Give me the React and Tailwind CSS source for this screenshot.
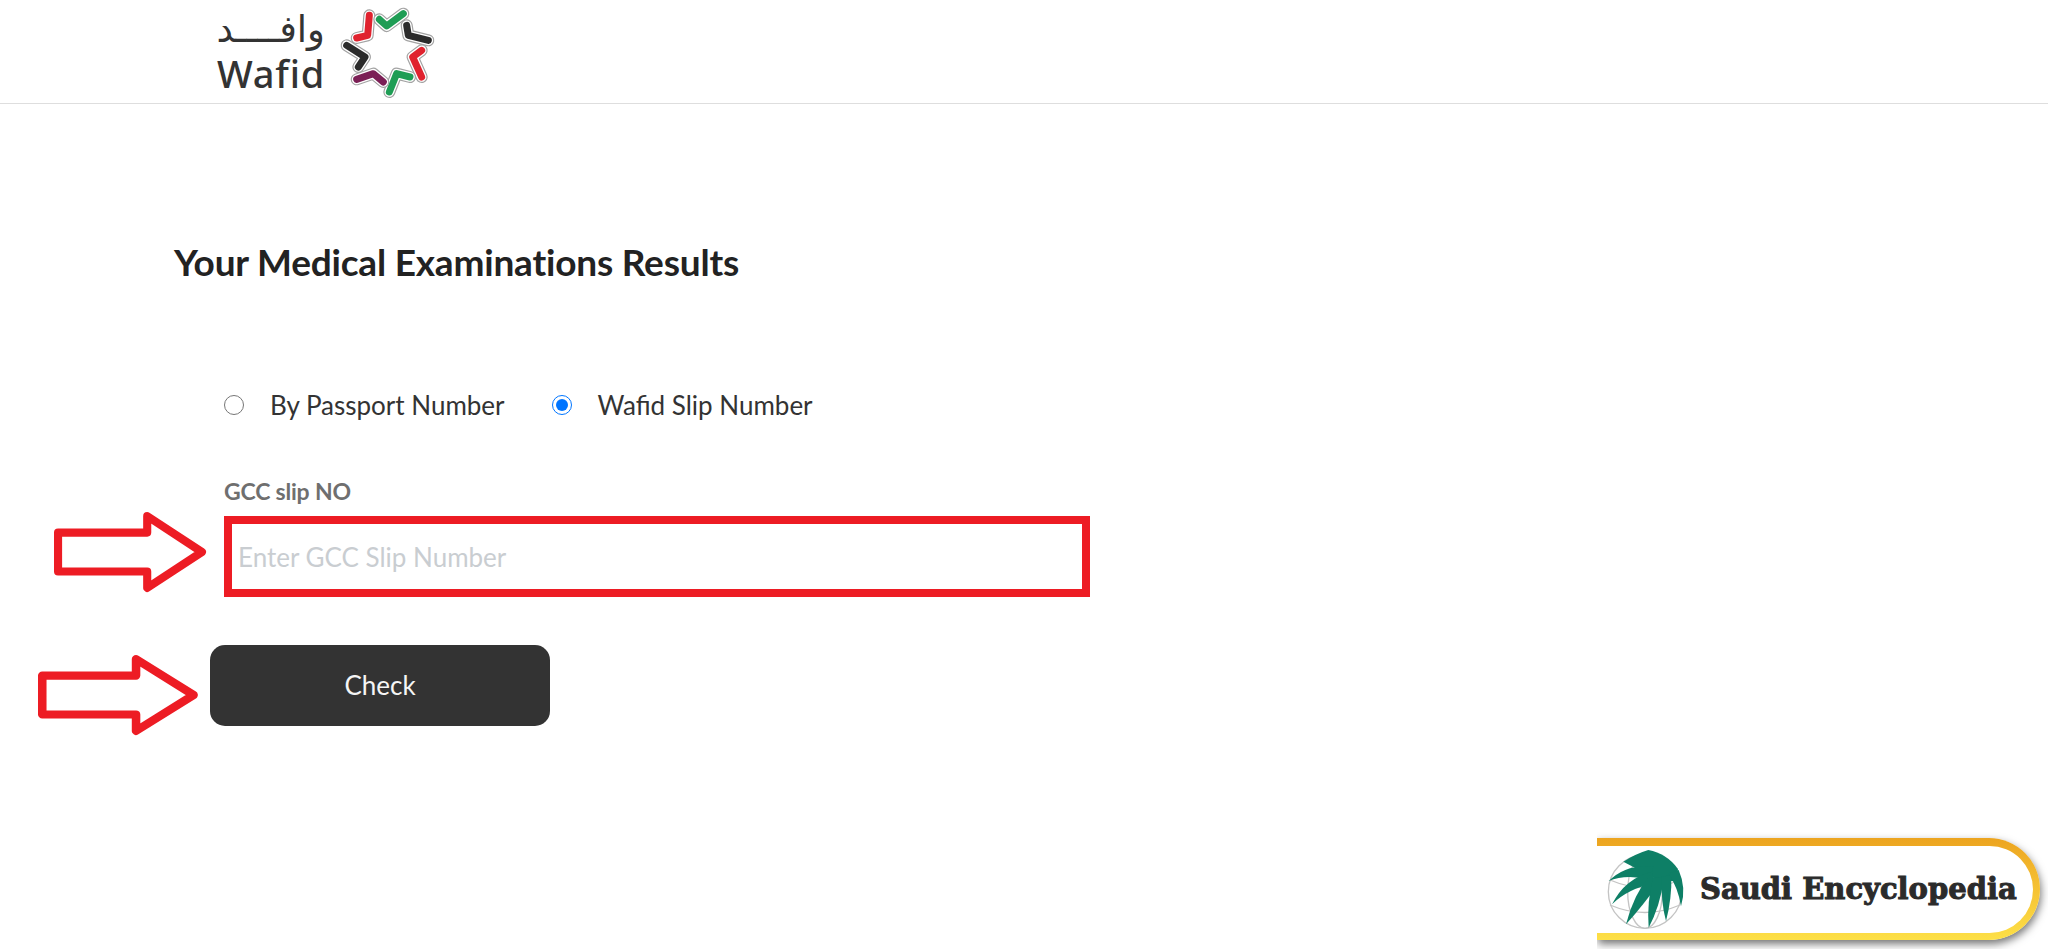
const chevrons = [
  { points: '118,40 113,100 80,108', color: '#e0222e' },
  { points: '148,52 170,72 220,35', color: '#1f9d55' },
  { points: '230,70 235,100 295,115', color: '#2b2b2b' },
  { points: '275,145 248,165 275,225', color: '#e0222e' },
  { points: '178,270 200,215 240,225', color: '#1f9d55' },
  { points: '160,240 130,215 80,232', color: '#7b1f55' },
  { points: '50,130 105,165 85,195', color: '#2b2b2b' },
]

function WafidStar() {
  return (
    <svg className="w-[110px] h-[100px] shrink-0" viewBox="0 0 330 300" fill="none">
      {chevrons.map((c) => (
        <g key={c.points} strokeLinecap="round" strokeLinejoin="round">
          <polyline points={c.points} stroke="#a3a3a3" strokeWidth="36" />
          <polyline points={c.points} stroke="#ffffff" strokeWidth="29" />
          <polyline points={c.points} stroke={c.color} strokeWidth="21" />
        </g>
      ))}
    </svg>
  )
}

function OutlineArrow({ className }) {
  return (
    <svg className={className} viewBox="0 0 152 80" fill="none" preserveAspectRatio="none">
      <path
        d="M4 21 H92 V5 L146 40 L92 75 V59 H4 Z"
        stroke="#ed1c24"
        strokeWidth="8"
        strokeLinejoin="round"
      />
    </svg>
  )
}

function Globe() {
  return (
    <svg className="w-[90px] h-[90px] shrink-0" viewBox="0 0 270 270" fill="none">
      <g stroke="#c4c4c4" strokeWidth="4">
        <circle cx="135" cy="140" r="110" />
        <ellipse cx="135" cy="140" rx="52" ry="110" />
        <path d="M30 105 Q135 150 240 105 M30 180 Q135 225 240 180" />
      </g>
      <g fill="#0e7f66">
        <path d="M165 100 L70 50 Q110 25 145 15 Q200 25 234 72 L228 110 Z" />
        <path d="M160 65 Q80 55 26 108 Q80 85 150 105 Z" />
        <path d="M155 80 Q75 100 36 178 Q85 130 165 115 Z" />
        <path d="M150 90 Q100 150 78 238 Q130 180 180 110 Z" />
        <path d="M160 95 Q140 170 146 248 Q180 185 192 100 Z" />
        <path d="M185 95 Q182 170 198 228 Q216 160 214 90 Z" />
        <path d="M205 85 Q235 130 243 184 Q260 130 236 75 Z" />
      </g>
    </svg>
  )
}

export default function App() {
  return (
    <div className="relative min-h-[949px] overflow-hidden bg-white font-['Lato',sans-serif] text-[#212529]">
      <header className="h-[104px] border-b border-[#dedede] pl-[217px] flex items-center gap-[5px]">
        <div className="w-[108px] text-[#333] pb-[6px]">
          <div className="h-[48px] text-right font-['DejaVu_Sans',sans-serif] text-[37px] leading-[48px]" dir="rtl">
            وافــــد
          </div>
          <div className="font-['Noto_Sans',sans-serif] font-medium text-[38px] leading-[38px] tracking-[0.8px]">Wafid</div>
        </div>
        <WafidStar />
      </header>

      <main className="pl-[174px] pt-[136px]">
        <h1 className="text-[37px] leading-[44px] font-bold tracking-[-0.2px] text-[#222]">
          Your Medical Examinations Results
        </h1>

        <form className="pl-[50px] pt-[99px]">
          <div className="flex items-center h-[44px] text-[26px] text-[#333]">
            <input type="radio" name="mode" className="w-[20px] h-[20px]" />
            <label className="ml-[26px]">By Passport Number</label>
            <input type="radio" name="mode" defaultChecked className="w-[20px] h-[20px] ml-[47px]" />
            <label className="ml-[26px]">Wafid Slip Number</label>
          </div>

          <label className="block mt-[50px] text-[23px] leading-[28px] font-bold tracking-[-0.2px] text-[#6f6f6f]">GCC slip NO</label>

          <div className="relative mt-[11px] w-[866px]">
            <OutlineArrow className="absolute left-[-170px] top-[-5px] w-[154px] h-[82px]" />
            <input
              type="text"
              placeholder="Enter GCC Slip Number"
              className="block w-full h-[81px] border-[8px] border-[#ed1c24] bg-white px-[6px] text-[26px] outline-none placeholder:text-[#c9cdd1]"
            />
          </div>

          <div className="relative mt-[48px] ml-[-14px] w-[340px]">
            <OutlineArrow className="absolute left-[-172px] top-[9px] w-[162px] h-[82px]" />
            <button type="button" className="w-full h-[81px] rounded-[15px] bg-[#333333] text-[26px] text-[#f5f5f5]">
              Check
            </button>
          </div>
        </form>
      </main>

      <div className="absolute left-[1597px] top-[825px] w-[451px] h-[124px] overflow-hidden pt-[13px]">
        <div className="w-[443px] h-[102px] rounded-r-[52px] bg-gradient-to-b from-[#eca41f] to-[#fde047] pt-[8px] pb-[7px] pr-[7px] shadow-[1px_4px_9px_rgba(0,0,0,0.55)]">
          <div className="h-full rounded-r-[45px] bg-white flex items-center pl-[3px] gap-[10px]">
            <Globe />
            <span className="font-['DejaVu_Serif',serif] font-bold text-[29px] leading-none text-[#2b2b2b] whitespace-nowrap [-webkit-text-stroke:1px_#2b2b2b]">
              Saudi Encyclopedia
            </span>
          </div>
        </div>
      </div>
    </div>
  )
}
